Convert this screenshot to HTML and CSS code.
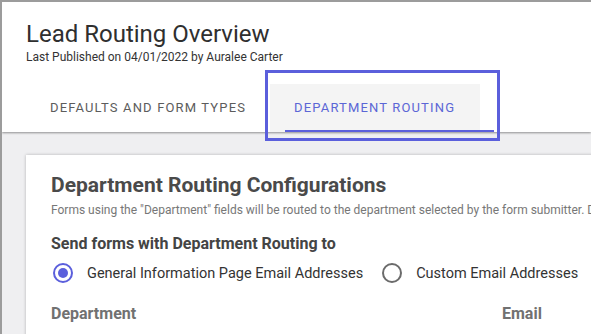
FILE: index.html
```html
<!DOCTYPE html>
<html>
  <head>
    <meta charset="UTF-8" />
    <title>Lead Routing Overview</title>
    <link rel="stylesheet" href="styles.css">
  </head>

  <body>
    <div class="header">
      <h1 class="page-title">Lead Routing Overview</h1>
      <div class="published">Last Published on 04/01/2022 by Auralee Carter</div>

      <div class="tabs">
        <div class="tab">Defaults and Form Types</div>
        <div class="tab active">
          Department Routing
          <span class="tab-line"></span>
        </div>
      </div>

      <!-- highlight frame around the active tab -->
      <div class="highlight"></div>
    </div>

    <div class="main">
      <div class="card">
        <h2 class="card-title">Department Routing Configurations</h2>
        <p class="card-desc">Forms using the "Department" fields will be routed to the department selected by the form submitter. Department Routing overrides Form Types.</p>

        <h3 class="send-title">Send forms with Department Routing to</h3>
        <div class="radio-row">
          <label class="radio-item">
            <span class="radio checked"></span>
            General Information Page Email Addresses
          </label>
          <label class="radio-item">
            <span class="radio"></span>
            Custom Email Addresses
          </label>
        </div>

        <div class="columns">
          <div class="col-head">Department</div>
          <div class="col-head">Email</div>
        </div>
      </div>
    </div>
  </body>
</html>
```

FILE: styles.css
```css
html,
body {
  margin: 0;
  height: 100%;
}
body {
  font-family: Roboto, "Noto Sans", sans-serif;
  background-color: #efeff1;
  border-top: 2px solid #9c9c9c;
  border-left: 2px solid #9c9c9c;
  box-sizing: border-box;
  overflow: hidden;
  color: #333;
}

/* Page header */
.header {
  position: relative;
  background-color: #fff;
  padding: 18px 0 0 24px;
  box-shadow: 0 1px 2px rgba(0, 0, 0, 0.4);
}
.page-title {
  margin: 0;
  font-size: 24px;
  line-height: 28px;
  font-weight: 400;
  color: #2f2f2f;
}
.published {
  margin-top: 1px;
  font-size: 12px;
  line-height: 16px;
  color: #333;
}

/* Tabs */
.tabs {
  display: flex;
  margin-top: 19px;
}
.tab {
  position: relative;
  height: 48px;
  line-height: 48px;
  padding: 0 24px;
  font-size: 13px;
  letter-spacing: 1.15px;
  text-transform: uppercase;
  color: #5c5c5c;
  white-space: nowrap;
}
.tab.active {
  background-color: #f4f4f4;
  color: #5b66d6;
  padding-right: 25px;
}
.tab-line {
  position: absolute;
  left: 15px;
  right: -14px;
  bottom: 0;
  height: 2px;
  background-color: #5b5fdc;
}
.highlight {
  position: absolute;
  left: 263px;
  top: 68px;
  width: 229px;
  height: 65px;
  border: 3px solid #5b5fdc;
}

/* Card */
.main {
  padding: 23px 0 0 24px;
}
.card {
  width: 640px;
  background-color: #fff;
  padding: 18px 0 30px 25px;
  box-shadow: 0 0 3px rgba(0, 0, 0, 0.25);
}
.card-title {
  margin: 0;
  font-size: 21px;
  line-height: 24px;
  font-weight: 700;
  color: #4a4a4a;
}
.card-desc {
  margin: 6px 0 0;
  font-size: 12px;
  line-height: 15px;
  color: #777;
  white-space: nowrap;
}
.send-title {
  margin: 16px 0 0;
  font-size: 16px;
  line-height: 20px;
  font-weight: 700;
  color: #444;
}
.radio-row {
  display: flex;
  align-items: center;
  gap: 17px;
  margin-top: 7px;
  height: 24px;
}
.radio-item {
  display: flex;
  align-items: center;
  gap: 14px;
  font-size: 14.5px;
  color: #333;
}
.radio {
  width: 20px;
  height: 20px;
  border: 2px solid #6b6b6b;
  border-radius: 50%;
  box-sizing: border-box;
  margin-left: 2px;
  display: flex;
  align-items: center;
  justify-content: center;
}
.radio.checked {
  border-color: #5b5fdc;
}
.radio.checked::after {
  content: "";
  width: 10px;
  height: 10px;
  border-radius: 50%;
  background-color: #5b5fdc;
}
.columns {
  display: grid;
  grid-template-columns: 451px 1fr;
  margin-top: 19px;
}
.col-head {
  font-size: 16px;
  line-height: 20px;
  font-weight: 700;
  color: #717171;
}
```
